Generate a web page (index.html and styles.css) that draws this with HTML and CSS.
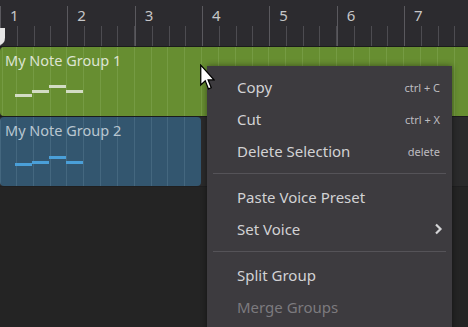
FILE: index.html
```html
<!DOCTYPE html>
<html>
<head>
<meta charset="utf-8">
<link rel="stylesheet" href="styles.css">
</head>
<body>
<div class="editor">
  <div class="ruler">
    <div class="bar"><span>1</span></div>
    <div class="bar"><span>2</span></div>
    <div class="bar"><span>3</span></div>
    <div class="bar"><span>4</span></div>
    <div class="bar"><span>5</span></div>
    <div class="bar"><span>6</span></div>
    <div class="bar"><span>7</span></div>
    <div class="playhead"></div>
  </div>
  <div class="lane">
    <div class="group green">
      <div class="group-name">My Note Group 1</div>
      <div class="notes">
        <i class="note" style="margin-top:9px"></i>
        <i class="note" style="margin-top:5px"></i>
        <i class="note" style="margin-top:0px"></i>
        <i class="note" style="margin-top:5px"></i>
      </div>
    </div>
  </div>
  <div class="lane lane-dark">
    <div class="group blue">
      <div class="group-name">My Note Group 2</div>
      <div class="notes">
        <i class="note" style="margin-top:7px"></i>
        <i class="note" style="margin-top:5px"></i>
        <i class="note" style="margin-top:0px"></i>
        <i class="note" style="margin-top:5px"></i>
      </div>
    </div>
  </div>

  <div class="menu">
    <div class="item"><span>Copy</span><span class="key">ctrl + C</span></div>
    <div class="item"><span>Cut</span><span class="key">ctrl + X</span></div>
    <div class="item"><span>Delete Selection</span><span class="key">delete</span></div>
    <div class="sep"></div>
    <div class="item"><span>Paste Voice Preset</span></div>
    <div class="item"><span>Set Voice</span>
      <svg class="chev" width="10" height="12" viewBox="0 0 10 12"><path d="M3 1.5 L7.5 6 L3 10.5" fill="none" stroke="#d4d4d6" stroke-width="2.2"/></svg>
    </div>
    <div class="sep"></div>
    <div class="item"><span>Split Group</span></div>
    <div class="item disabled"><span>Merge Groups</span></div>
  </div>

  <svg class="cursor" width="15" height="27" viewBox="0 0 12 21">
    <path d="M0.6 0.6 L0.6 16.5 L4.2 13.2 L6.8 19.6 L9 18.7 L6.5 12.4 L11.2 12.4 Z" fill="#ffffff" stroke="#000000" stroke-width="1" stroke-linejoin="miter"/>
  </svg>
</div>
</body>
</html>
```

FILE: styles.css
```css
html, body {
  margin: 0;
  padding: 0;
  background: #242424;
  overflow: hidden;
}
.editor {
  position: relative;
  width: 468px;
  height: 327px;
  font-family: "Noto Sans", "Open Sans", sans-serif;
  background: #242424;
}
.ruler {
  position: relative;
  display: flex;
  height: 46px;
  background: #2c2b2f;
  overflow: hidden;
}
.bar {
  flex: 0 0 67.33px;
  height: 46px;
  box-sizing: border-box;
  padding-left: 10px;
  padding-top: 5px;
  color: #c6c6c8;
  font-size: 15px;
  line-height: 20px;
  background:
    linear-gradient(#5a595e, #5a595e) 0 6px / 1px 40px no-repeat,
    repeating-linear-gradient(to right, #4d4c51 0 1px, transparent 1px 16.83px) 0 26px / 100% 20px no-repeat;
}
.playhead {
  position: absolute;
  left: -6px;
  top: 28px;
  width: 11px;
  height: 17px;
  background: #e6e6e6;
  border-radius: 0 0 6px 6px / 0 0 8px 8px;
}
.lane {
  height: 69px;
  border-top: 1px solid #1b1b1c;
  display: flex;
}
.lane-dark {
  background: #2a2a2b;
  border-bottom: 1px solid #1f1f20;
}
.group {
  box-sizing: border-box;
  height: 69px;
  border-radius: 4px;
  padding: 3px 0 0 5px;
}
.green {
  width: 100%;
  border-radius: 4px 0 0 4px;
  background-color: #678e31;
  background-image: repeating-linear-gradient(to right, #759b43 0 1px, transparent 1px 16.83px);
  background-position: 16px 0;
  color: #dde4d2;
}
.blue {
  width: 201px;
  background-color: #33566f;
  background-image: repeating-linear-gradient(to right, #44677f 0 1px, transparent 1px 16.83px);
  background-position: 16px 0;
  color: #b9c6d1;
}
.group-name {
  font-size: 14.5px;
  line-height: 20px;
}
.notes {
  display: flex;
  padding-left: 10px;
  margin-top: 15px;
  align-items: flex-start;
}
.note {
  display: block;
  width: 17px;
  height: 3px;
}
.green .note { background: #d3dcc4; }
.blue .note { background: #4a9fd8; }
.blue .notes { margin-top: 16px; }

.menu {
  position: absolute;
  left: 207px;
  top: 66px;
  width: 245px;
  height: 270px;
  box-sizing: border-box;
  background: #3d3b3f;
  padding: 5px 12px 0 6px;
  box-shadow: 0 0 6px rgba(0, 0, 0, 0.45);
}
.item {
  height: 32px;
  display: flex;
  align-items: center;
  justify-content: space-between;
  padding-left: 24px;
  font-size: 15px;
  color: #d2d2d4;
}
.item.disabled { color: #7c7a7e; }
.key {
  font-size: 11px;
  color: #bdbcc0;
}
.chev { margin-right: -3px; }
.sep {
  height: 14px;
  box-sizing: border-box;
  margin-right: -6px;
  background: linear-gradient(#555358, #555358) 0 6px / 100% 1px no-repeat;
}
.cursor {
  position: absolute;
  left: 200px;
  top: 64px;
}
```
